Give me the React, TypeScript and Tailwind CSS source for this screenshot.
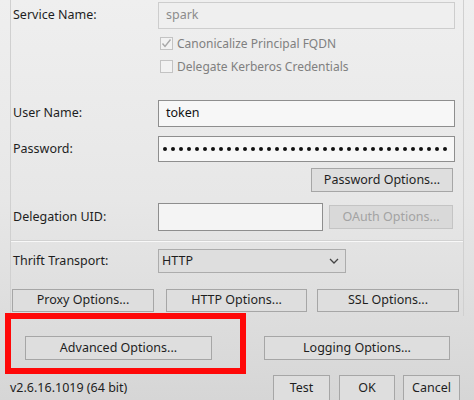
import React from "react";

const font = { fontFamily: '"Noto Sans", "DejaVu Sans", sans-serif' };

function Btn({ w, label, disabled = false, h = "h-[24px]" }: { w: string; label: string; disabled?: boolean; h?: string }) {
  return (
    <div
      className={`${w} ${h} shrink-0 flex items-center justify-center border text-[12.5px] ${
        disabled
          ? "border-[#c4c4c4] bg-[#d9d9d9] text-[#a3a3a3]"
          : "border-[#a6a6a6] bg-[#dedede] text-[#1e1e1e]"
      }`}
    >
      {label}
    </div>
  );
}

function Label({ children }: { children: React.ReactNode }) {
  return <div className="w-[145px] shrink-0 text-[12.5px] text-[#1e1e1e]">{children}</div>;
}

export default function App() {
  const dots = Array.from({ length: 36 });
  return (
    <div
      className="relative w-[474px] h-[400px] overflow-hidden bg-gradient-to-b from-[#efefef] via-[#e7e7e7] to-[#d6d6d6]"
      style={font}
    >
      <div className="ml-[10px] w-[454px] h-[316px] border-x border-[#d0d0d0] pl-[2px] flex flex-col">
        {/* Service Name */}
        <div className="mt-[2px] h-[27px] flex items-center">
          <Label>Service Name:</Label>
          <div className="w-[297px] h-[27px] border border-[#cdcdcd] bg-[#efefef] flex items-center pl-[7px] text-[12.5px] text-[#8c8c8c]">
            spark
          </div>
        </div>
        {/* Canonicalize */}
        <div className="mt-[8px] h-[13px] flex items-center pl-[147px]">
          <div className="w-[13px] h-[13px] border border-[#c3c3c3] bg-[#f2f2f2] flex items-center justify-center">
            <svg width="11" height="11" viewBox="0 0 11 11">
              <path d="M1.5 5.5 L4 8.5 L9.5 1.5" fill="none" stroke="#a8a8a8" strokeWidth="1.4" />
            </svg>
          </div>
          <span className="ml-[4px] text-[12px] text-[#808080]">Canonicalize Principal FQDN</span>
        </div>
        {/* Delegate */}
        <div className="mt-[10px] h-[13px] flex items-center pl-[147px]">
          <div className="w-[13px] h-[13px] border border-[#c3c3c3] bg-[#f2f2f2]" />
          <span className="ml-[4px] text-[12px] text-[#808080]">Delegate Kerberos Credentials</span>
        </div>
        {/* User Name */}
        <div className="mt-[27px] h-[27px] flex items-center">
          <Label>User Name:</Label>
          <div className="w-[297px] h-[27px] border border-[#8e8e8e] bg-[#f7f7f7] flex items-center pl-[7px] text-[12.5px] text-[#111]">
            token
          </div>
        </div>
        {/* Password */}
        <div className="mt-[9px] h-[26px] flex items-center">
          <Label>Password:</Label>
          <div className="w-[297px] h-[26px] border border-[#8e8e8e] bg-[#f7f7f7] flex items-center pl-[4px] gap-[4px]">
            {dots.map((_, i) => (
              <span key={i} className="w-[4px] h-[4px] rounded-full bg-[#111] shrink-0" />
            ))}
          </div>
        </div>
        {/* Password Options */}
        <div className="mt-[6px] flex">
          <div className="ml-[298px]">
            <Btn w="w-[142px]" label="Password Options..." />
          </div>
        </div>
        {/* Delegation UID */}
        <div className="mt-[11px] h-[28px] flex items-center">
          <Label>Delegation UID:</Label>
          <div className="w-[165px] h-[28px] border border-[#8e8e8e] bg-[#f4f4f4]" />
          <div className="ml-[6px]">
            <Btn w="w-[124px]" label="OAuth Options..." disabled />
          </div>
        </div>
        {/* separator */}
        <div className="mt-[9px] -ml-[2px] w-[452px] h-px bg-[#d2d2d2]" />
        <div className="-ml-[2px] w-[452px] h-px bg-[#f8f8f8]" />
        {/* Thrift Transport */}
        <div className="mt-[7px] h-[24px] flex items-center">
          <Label>Thrift Transport:</Label>
          <div className="w-[188px] h-[24px] border border-[#acacac] bg-[#dedede] flex items-center justify-between pl-[3px] pr-[6px] text-[12.5px] text-[#1e1e1e]">
            <span>HTTP</span>
            <svg width="10" height="6" viewBox="0 0 10 6">
              <path d="M1 1 L5 5 L9 1" fill="none" stroke="#444" strokeWidth="1.3" />
            </svg>
          </div>
        </div>
        {/* Options row */}
        <div className="mt-[16px] -ml-[1px] flex">
          <Btn w="w-[142px]" h="h-[23px]" label="Proxy Options..." />
          <div className="ml-[12px]">
            <Btn w="w-[141px]" h="h-[23px]" label="HTTP Options..." />
          </div>
          <div className="ml-[10px]">
            <Btn w="w-[142px]" h="h-[23px]" label="SSL Options..." />
          </div>
        </div>
      </div>

      {/* Advanced / Logging */}
      <div className="mt-[20px] pl-[25px] flex">
        <Btn w="w-[187px]" label="Advanced Options..." />
        <div className="ml-[52px]">
          <Btn w="w-[186px]" label="Logging Options..." />
        </div>
      </div>

      {/* bottom row */}
      <div className="mt-[16px] h-[24px] flex items-center">
        <div className="w-[273px] pl-[10px] text-[12.5px] text-[#1e1e1e]">v2.6.16.1019 (64 bit)</div>
        <Btn w="w-[57px]" h="h-[26px]" label="Test" />
        <div className="ml-[9px]">
          <Btn w="w-[56px]" h="h-[26px]" label="OK" />
        </div>
        <div className="ml-[8px]">
          <Btn w="w-[57px]" h="h-[26px]" label="Cancel" />
        </div>
      </div>

      {/* red annotation */}
      <div className="absolute left-[5px] top-[313px] w-[241px] h-[61px] border-[6px] border-[#ff0808]" />
    </div>
  );
}
